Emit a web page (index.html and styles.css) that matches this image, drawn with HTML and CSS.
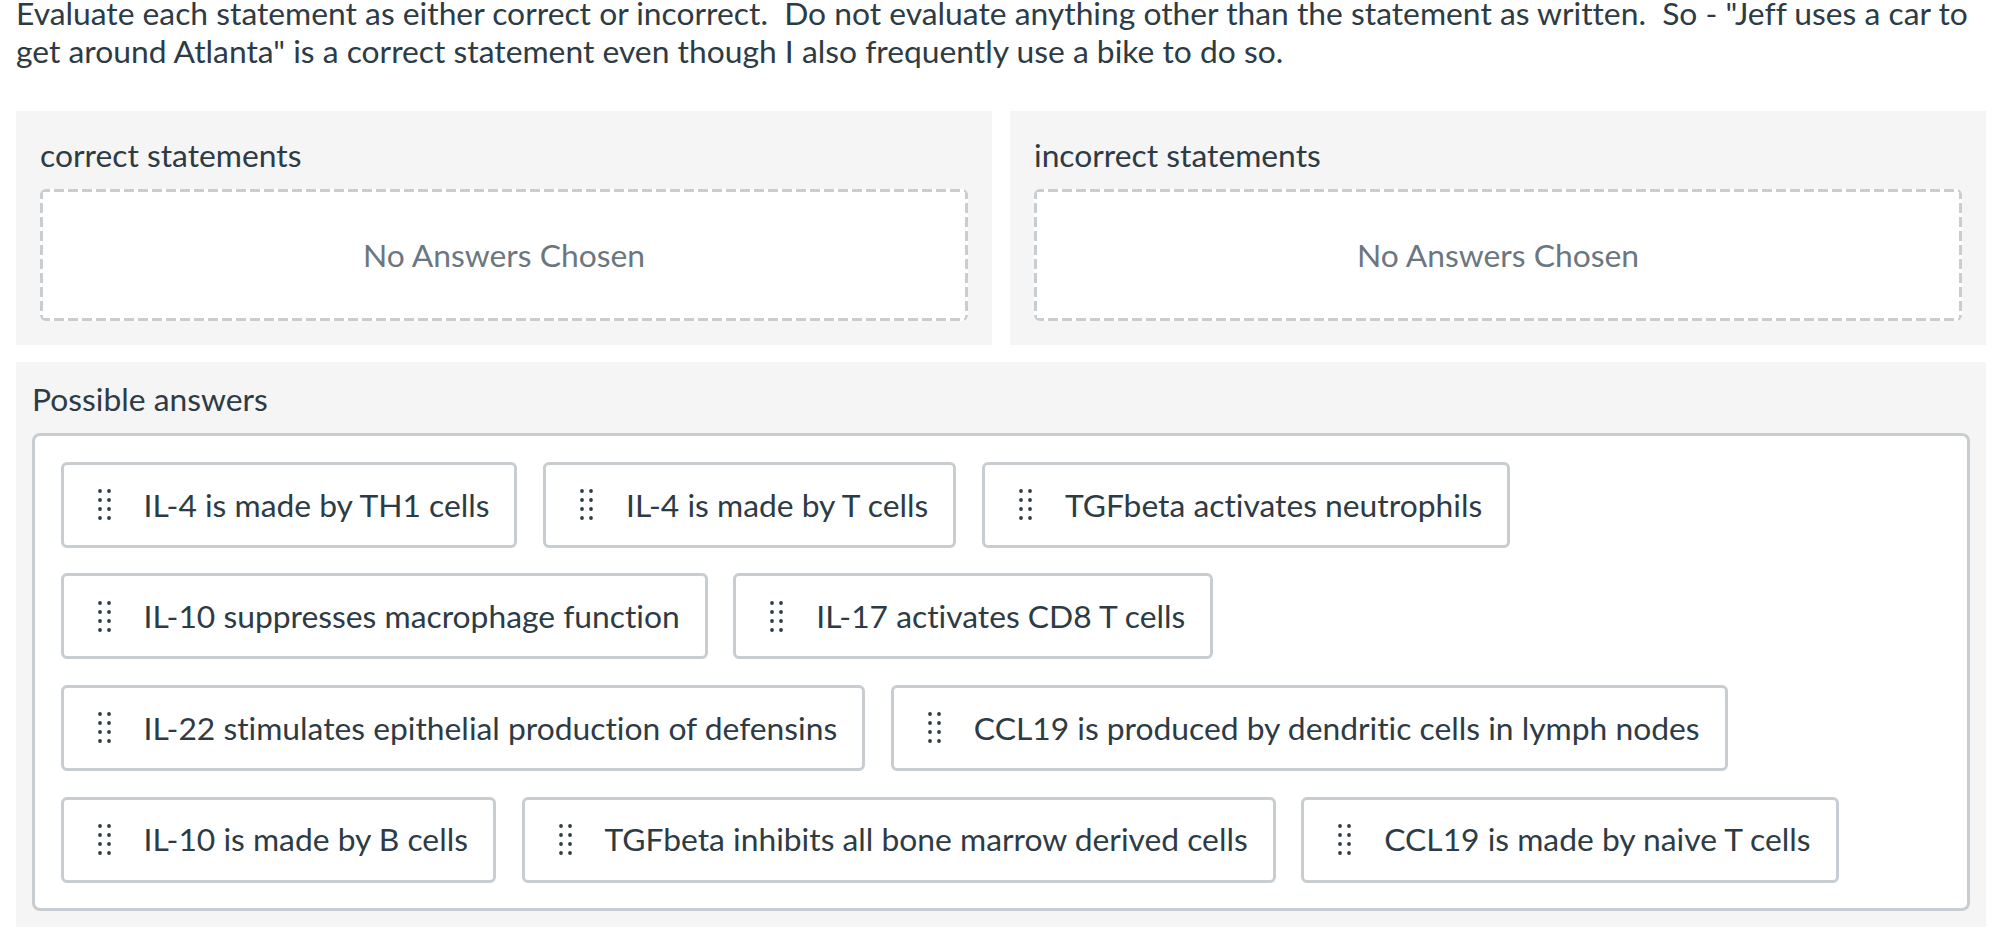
FILE: index.html
```html
<!DOCTYPE html>
<html lang="en">
<head>
<meta charset="utf-8">
<title>Categorize statements</title>
<link rel="stylesheet" href="styles.css">
</head>
<body>
<div class="page">
  <p class="prompt">Evaluate each statement as either correct or incorrect.&nbsp; Do not evaluate anything other than the statement as written.&nbsp; So - "Jeff uses a car to get around Atlanta" is a correct statement even though I also frequently use a bike to do so.</p>

  <div class="categories">
    <section class="category">
      <h3 class="category-title">correct statements</h3>
      <div class="dropzone">No Answers Chosen</div>
    </section>
    <section class="category">
      <h3 class="category-title">incorrect statements</h3>
      <div class="dropzone">No Answers Chosen</div>
    </section>
  </div>

  <section class="answers">
    <h3 class="answers-title">Possible answers</h3>
    <div class="answer-pool">
      <div class="chip"><svg class="grip" viewBox="0 0 13 31" width="13" height="31"><g fill="#2d3b45"><circle cx="2" cy="2" r="1.9"/><circle cx="11" cy="2" r="1.9"/><circle cx="2" cy="11" r="1.9"/><circle cx="11" cy="11" r="1.9"/><circle cx="2" cy="20" r="1.9"/><circle cx="11" cy="20" r="1.9"/><circle cx="2" cy="29" r="1.9"/><circle cx="11" cy="29" r="1.9"/></g></svg><span class="chip-text">IL-4 is made by TH1 cells</span></div>
      <div class="chip"><svg class="grip" viewBox="0 0 13 31" width="13" height="31"><g fill="#2d3b45"><circle cx="2" cy="2" r="1.9"/><circle cx="11" cy="2" r="1.9"/><circle cx="2" cy="11" r="1.9"/><circle cx="11" cy="11" r="1.9"/><circle cx="2" cy="20" r="1.9"/><circle cx="11" cy="20" r="1.9"/><circle cx="2" cy="29" r="1.9"/><circle cx="11" cy="29" r="1.9"/></g></svg><span class="chip-text">IL-4 is made by T cells</span></div>
      <div class="chip"><svg class="grip" viewBox="0 0 13 31" width="13" height="31"><g fill="#2d3b45"><circle cx="2" cy="2" r="1.9"/><circle cx="11" cy="2" r="1.9"/><circle cx="2" cy="11" r="1.9"/><circle cx="11" cy="11" r="1.9"/><circle cx="2" cy="20" r="1.9"/><circle cx="11" cy="20" r="1.9"/><circle cx="2" cy="29" r="1.9"/><circle cx="11" cy="29" r="1.9"/></g></svg><span class="chip-text">TGFbeta activates neutrophils</span></div>
      <div class="chip"><svg class="grip" viewBox="0 0 13 31" width="13" height="31"><g fill="#2d3b45"><circle cx="2" cy="2" r="1.9"/><circle cx="11" cy="2" r="1.9"/><circle cx="2" cy="11" r="1.9"/><circle cx="11" cy="11" r="1.9"/><circle cx="2" cy="20" r="1.9"/><circle cx="11" cy="20" r="1.9"/><circle cx="2" cy="29" r="1.9"/><circle cx="11" cy="29" r="1.9"/></g></svg><span class="chip-text">IL-10 suppresses macrophage function</span></div>
      <div class="chip"><svg class="grip" viewBox="0 0 13 31" width="13" height="31"><g fill="#2d3b45"><circle cx="2" cy="2" r="1.9"/><circle cx="11" cy="2" r="1.9"/><circle cx="2" cy="11" r="1.9"/><circle cx="11" cy="11" r="1.9"/><circle cx="2" cy="20" r="1.9"/><circle cx="11" cy="20" r="1.9"/><circle cx="2" cy="29" r="1.9"/><circle cx="11" cy="29" r="1.9"/></g></svg><span class="chip-text">IL-17 activates CD8 T cells</span></div>
      <div class="chip"><svg class="grip" viewBox="0 0 13 31" width="13" height="31"><g fill="#2d3b45"><circle cx="2" cy="2" r="1.9"/><circle cx="11" cy="2" r="1.9"/><circle cx="2" cy="11" r="1.9"/><circle cx="11" cy="11" r="1.9"/><circle cx="2" cy="20" r="1.9"/><circle cx="11" cy="20" r="1.9"/><circle cx="2" cy="29" r="1.9"/><circle cx="11" cy="29" r="1.9"/></g></svg><span class="chip-text">IL-22 stimulates epithelial production of defensins</span></div>
      <div class="chip"><svg class="grip" viewBox="0 0 13 31" width="13" height="31"><g fill="#2d3b45"><circle cx="2" cy="2" r="1.9"/><circle cx="11" cy="2" r="1.9"/><circle cx="2" cy="11" r="1.9"/><circle cx="11" cy="11" r="1.9"/><circle cx="2" cy="20" r="1.9"/><circle cx="11" cy="20" r="1.9"/><circle cx="2" cy="29" r="1.9"/><circle cx="11" cy="29" r="1.9"/></g></svg><span class="chip-text">CCL19 is produced by dendritic cells in lymph nodes</span></div>
      <div class="chip"><svg class="grip" viewBox="0 0 13 31" width="13" height="31"><g fill="#2d3b45"><circle cx="2" cy="2" r="1.9"/><circle cx="11" cy="2" r="1.9"/><circle cx="2" cy="11" r="1.9"/><circle cx="11" cy="11" r="1.9"/><circle cx="2" cy="20" r="1.9"/><circle cx="11" cy="20" r="1.9"/><circle cx="2" cy="29" r="1.9"/><circle cx="11" cy="29" r="1.9"/></g></svg><span class="chip-text">IL-10 is made by B cells</span></div>
      <div class="chip"><svg class="grip" viewBox="0 0 13 31" width="13" height="31"><g fill="#2d3b45"><circle cx="2" cy="2" r="1.9"/><circle cx="11" cy="2" r="1.9"/><circle cx="2" cy="11" r="1.9"/><circle cx="11" cy="11" r="1.9"/><circle cx="2" cy="20" r="1.9"/><circle cx="11" cy="20" r="1.9"/><circle cx="2" cy="29" r="1.9"/><circle cx="11" cy="29" r="1.9"/></g></svg><span class="chip-text">TGFbeta inhibits all bone marrow derived cells</span></div>
      <div class="chip"><svg class="grip" viewBox="0 0 13 31" width="13" height="31"><g fill="#2d3b45"><circle cx="2" cy="2" r="1.9"/><circle cx="11" cy="2" r="1.9"/><circle cx="2" cy="11" r="1.9"/><circle cx="11" cy="11" r="1.9"/><circle cx="2" cy="20" r="1.9"/><circle cx="11" cy="20" r="1.9"/><circle cx="2" cy="29" r="1.9"/><circle cx="11" cy="29" r="1.9"/></g></svg><span class="chip-text">CCL19 is made by naive T cells</span></div>
    </div>
  </section>
</div>
</body>
</html>
```

FILE: styles.css
```css
* {
  box-sizing: border-box;
}

html, body {
  margin: 0;
  padding: 0;
  background: #ffffff;
}

body {
  font-family: Lato, "Liberation Sans", sans-serif;
  font-size: 31.8px;
  line-height: 38.4px;
  color: #2d3b45;
  font-variant-ligatures: no-common-ligatures;
  overflow: hidden;
}

.page {
  padding: 0 12px 0 16px;
}

.prompt {
  margin: -6px 0 40px;
}

.categories {
  display: grid;
  grid-template-columns: 1fr 1fr;
  column-gap: 18px;
}

.category {
  background: #f5f5f5;
  padding: 24px;
}

.category-title,
.answers-title {
  margin: 0;
  font-size: 31.8px;
  font-weight: 400;
  line-height: 38.4px;
}

.category-title {
  padding-top: 1px;
  margin-bottom: 15px;
}

.dropzone {
  height: 132px;
  border-radius: 6px;
  background-color: #ffffff;
  background-image:
    repeating-linear-gradient(90deg, #c7cdd1 0 10px, transparent 10px 14px),
    repeating-linear-gradient(90deg, #c7cdd1 0 10px, transparent 10px 14px),
    repeating-linear-gradient(180deg, #c7cdd1 0 10px, transparent 10px 14px),
    repeating-linear-gradient(180deg, #c7cdd1 0 10px, transparent 10px 14px);
  background-size: 100% 3px, 100% 3px, 3px 100%, 3px 100%;
  background-position: left top, left bottom, left top, right top;
  background-repeat: no-repeat;
  color: #6b7780;
  display: flex;
  align-items: center;
  justify-content: center;
}

.answers {
  margin-top: 17px;
  background: #f5f5f5;
  padding: 17.5px 16px 16px;
}

.answers-title {
  margin-bottom: 15px;
}

.answer-pool {
  border: 3px solid #c7cdd1;
  border-radius: 8px;
  background: #ffffff;
  padding: 12.8px;
  display: flex;
  flex-wrap: wrap;
}

.chip {
  margin: 12.8px;
  height: 86px;
  border: 3px solid #c7cdd1;
  border-radius: 6px;
  background: #ffffff;
  padding: 0 25px 0 34px;
  display: flex;
  align-items: center;
}

.grip {
  flex: none;
  display: block;
  margin-right: 33px;
}

.chip-text {
  white-space: nowrap;
}
```
